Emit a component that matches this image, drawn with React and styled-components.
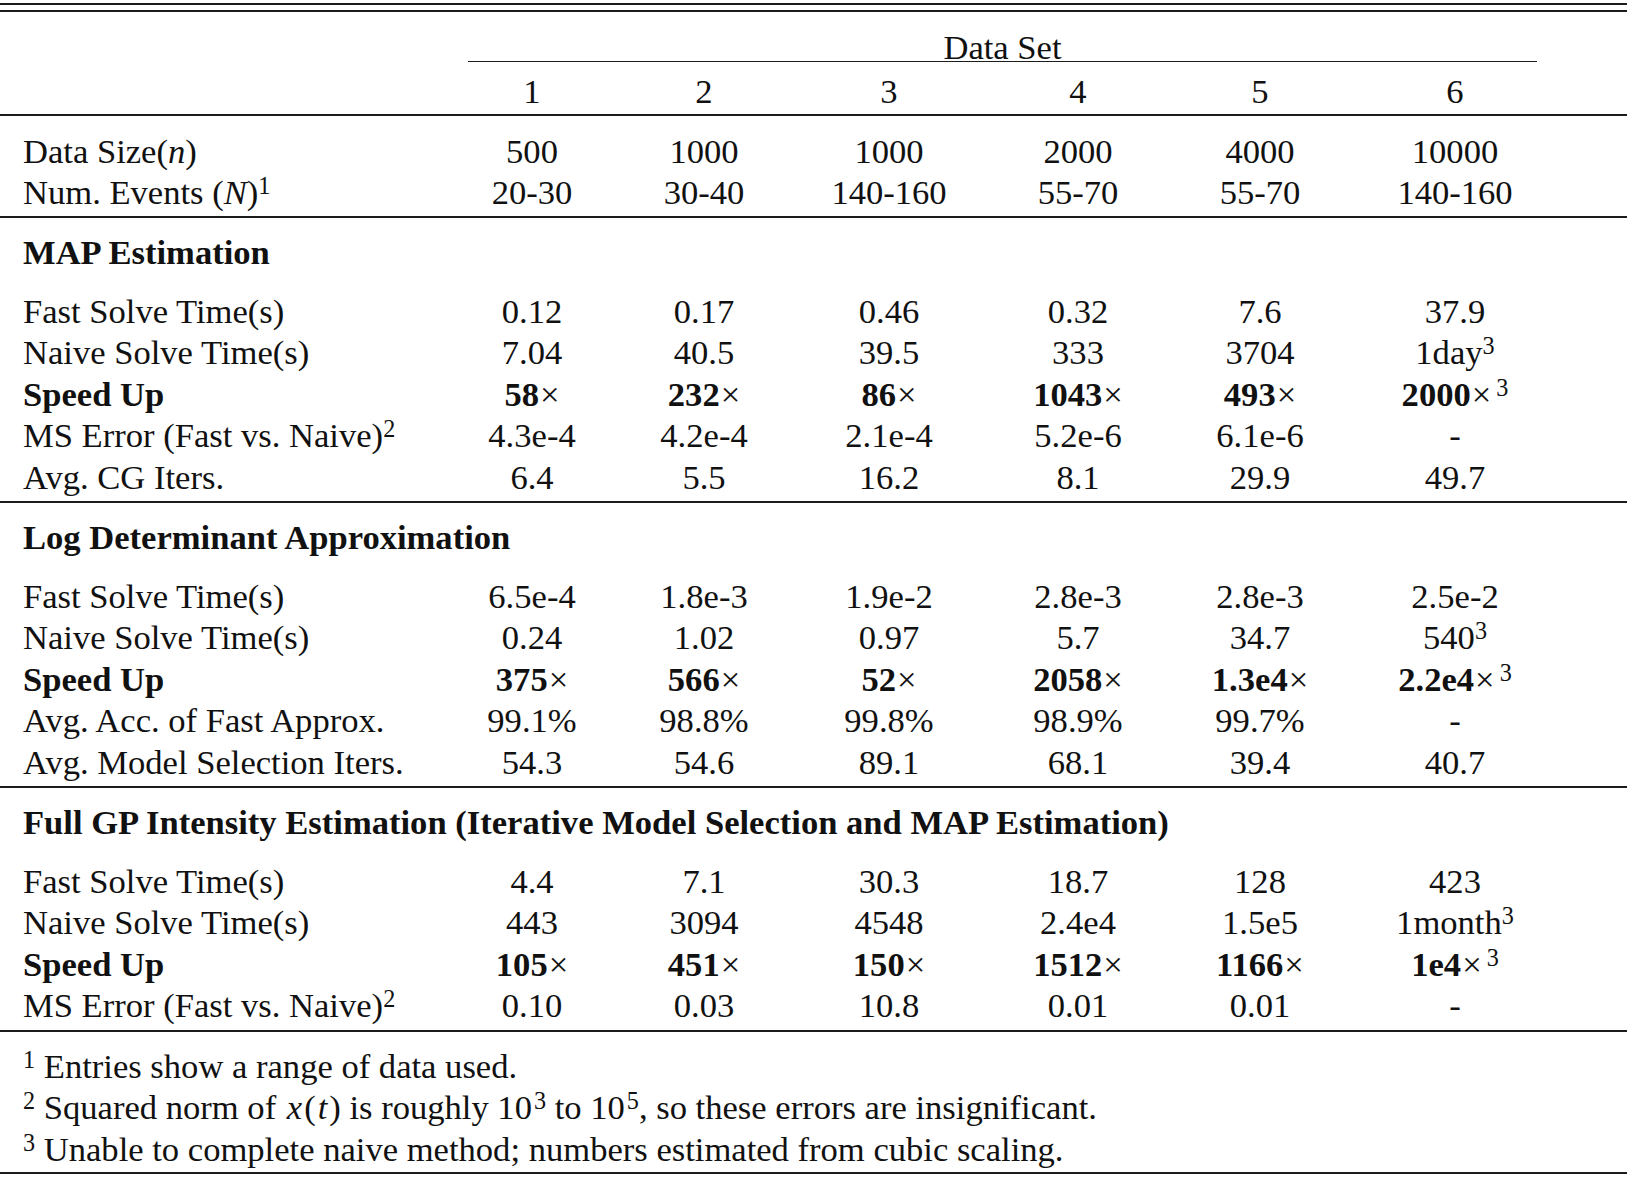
import React from "react";
import styled, { createGlobalStyle } from "styled-components";

const GlobalStyle = createGlobalStyle`
  html, body {
    margin: 0;
    padding: 0;
    background: #ffffff;
  }
  body {
    font-family: "Liberation Serif", "Times New Roman", serif;
    color: #111111;
  }
`;

// label column + six data columns + empty tail up to the rule end
const columns = "447px 170px 174px 196px 182px 182px 208px 68px";

const Page = styled.div`
  width: 1627px;
  font-size: 34.6px;
`;

const Rule = styled.div`
  height: 2px;
  background: #1c1c1c;
  margin-top: ${(p) => p.$gap || 0}px;
`;

const Block = styled.div`
  padding-top: ${(p) => p.$top || 0}px;
  padding-bottom: ${(p) => p.$bottom || 0}px;
`;

const SetRow = styled.div`
  display: grid;
  grid-template-columns: ${columns};
`;

const SetHead = styled.div`
  grid-column: 2 / 8;
  margin: 0 22px 0 21px;
  height: 27px;
  line-height: 27px;
  text-align: center;
  border-bottom: 1.5px solid #1c1c1c;
`;

const Row = styled.div`
  display: grid;
  grid-template-columns: ${columns};
  height: 41.6px;
  line-height: 41.6px;
  margin-top: ${(p) => p.$gap || 0}px;
  white-space: nowrap;
`;

const Label = styled.div`
  padding-left: 23px;
  font-weight: ${(p) => (p.$bold ? 700 : 400)};
`;

const Cell = styled.div`
  text-align: center;
`;

const Title = styled.div`
  padding-left: 23px;
  height: 41.6px;
  line-height: 41.6px;
  margin-bottom: 17px;
  font-weight: 700;
  white-space: nowrap;
`;

const Note = styled.div`
  padding-left: 23px;
  height: 41.6px;
  line-height: 41.6px;
  white-space: nowrap;
`;

const Sup = styled.sup`
  font-size: 0.7em;
  line-height: 0;
  vertical-align: 0.42em;
  margin-left: ${(p) => p.$gap || 0}px;
`;

const Var = styled.i`
  font-style: italic;
  margin: 0 ${(p) => p.$space || 0}px;
`;

const Bold = styled.b`
  font-weight: 700;
`;

const Times = styled.span`
  font-weight: 400;
  margin-left: 1px;
`;

const sections = [
  {
    title: "MAP Estimation",
    rows: [
      { label: "Fast Solve Time(s)", cells: ["0.12", "0.17", "0.46", "0.32", "7.6", "37.9"] },
      { label: "Naive Solve Time(s)", cells: ["7.04", "40.5", "39.5", "333", "3704", ["1day", "3"]] },
      { label: "Speed Up", speed: true, cells: ["58", "232", "86", "1043", "493", ["2000", "3"]] },
      {
        label: <>MS Error (Fast vs. Naive)<Sup>2</Sup></>,
        cells: ["4.3e-4", "4.2e-4", "2.1e-4", "5.2e-6", "6.1e-6", "-"],
      },
      { label: "Avg. CG Iters.", cells: ["6.4", "5.5", "16.2", "8.1", "29.9", "49.7"] },
    ],
  },
  {
    title: "Log Determinant Approximation",
    rows: [
      { label: "Fast Solve Time(s)", cells: ["6.5e-4", "1.8e-3", "1.9e-2", "2.8e-3", "2.8e-3", "2.5e-2"] },
      { label: "Naive Solve Time(s)", cells: ["0.24", "1.02", "0.97", "5.7", "34.7", ["540", "3"]] },
      { label: "Speed Up", speed: true, cells: ["375", "566", "52", "2058", "1.3e4", ["2.2e4", "3"]] },
      { label: "Avg. Acc. of Fast Approx.", cells: ["99.1%", "98.8%", "99.8%", "98.9%", "99.7%", "-"] },
      { label: "Avg. Model Selection Iters.", cells: ["54.3", "54.6", "89.1", "68.1", "39.4", "40.7"] },
    ],
  },
  {
    title: "Full GP Intensity Estimation (Iterative Model Selection and MAP Estimation)",
    rows: [
      { label: "Fast Solve Time(s)", cells: ["4.4", "7.1", "30.3", "18.7", "128", "423"] },
      { label: "Naive Solve Time(s)", cells: ["443", "3094", "4548", "2.4e4", "1.5e5", ["1month", "3"]] },
      { label: "Speed Up", speed: true, cells: ["105", "451", "150", "1512", "1166", ["1e4", "3"]] },
      {
        label: <>MS Error (Fast vs. Naive)<Sup>2</Sup></>,
        cells: ["0.10", "0.03", "10.8", "0.01", "0.01", "-"],
      },
    ],
  },
];

const Value = ({ value, speed }) => {
  const [v, sup] = Array.isArray(value) ? value : [value];
  if (speed) {
    return (
      <>
        <Bold>{v}</Bold>
        <Times>×</Times>
        {sup && <Sup $gap={5}>{sup}</Sup>}
      </>
    );
  }
  return (
    <>
      {v}
      {sup && <Sup>{sup}</Sup>}
    </>
  );
};

const DataRow = ({ row }) => (
  <Row>
    <Label $bold={row.speed}>{row.label}</Label>
    {row.cells.map((c, i) => (
      <Cell key={i}>
        <Value value={c} speed={row.speed} />
      </Cell>
    ))}
  </Row>
);

export default function App() {
  return (
    <Page>
      <GlobalStyle />
      <Rule $gap={3} />
      <Rule $gap={5} />

      <Block $top={21.5}>
        <SetRow>
          <SetHead>Data Set</SetHead>
        </SetRow>
        <Row $gap={9.2}>
          <Label />
          {[1, 2, 3, 4, 5, 6].map((n) => (
            <Cell key={n}>{n}</Cell>
          ))}
        </Row>
      </Block>
      <Rule $gap={1.7} />

      <Block $top={14.7} $bottom={2.1}>
        <Row>
          <Label>
            Data Size(<Var>n</Var>)
          </Label>
          {["500", "1000", "1000", "2000", "4000", "10000"].map((v, i) => (
            <Cell key={i}>{v}</Cell>
          ))}
        </Row>
        <Row>
          <Label>
            Num. Events (<Var>N</Var>)<Sup>1</Sup>
          </Label>
          {["20-30", "30-40", "140-160", "55-70", "55-70", "140-160"].map((v, i) => (
            <Cell key={i}>{v}</Cell>
          ))}
        </Row>
      </Block>
      <Rule />

      {sections.map((s) => (
        <React.Fragment key={s.title}>
          <Block $top={14} $bottom={2.5}>
            <Title>{s.title}</Title>
            {s.rows.map((r, i) => (
              <DataRow key={i} row={r} />
            ))}
          </Block>
          <Rule />
        </React.Fragment>
      ))}

      <Block $top={14} $bottom={2}>
        <Note>
          <Sup>1</Sup> Entries show a range of data used.
        </Note>
        <Note>
          <Sup>2</Sup> Squared norm of <Var $space={2}>x</Var>(<Var $space={2}>t</Var>) is roughly 10
          <Sup $gap={2}>3</Sup> to 10<Sup $gap={2}>5</Sup>, so these errors are insignificant.
        </Note>
        <Note>
          <Sup>3</Sup> Unable to complete naive method; numbers estimated from cubic scaling.
        </Note>
      </Block>
      <Rule />
    </Page>
  );
}
